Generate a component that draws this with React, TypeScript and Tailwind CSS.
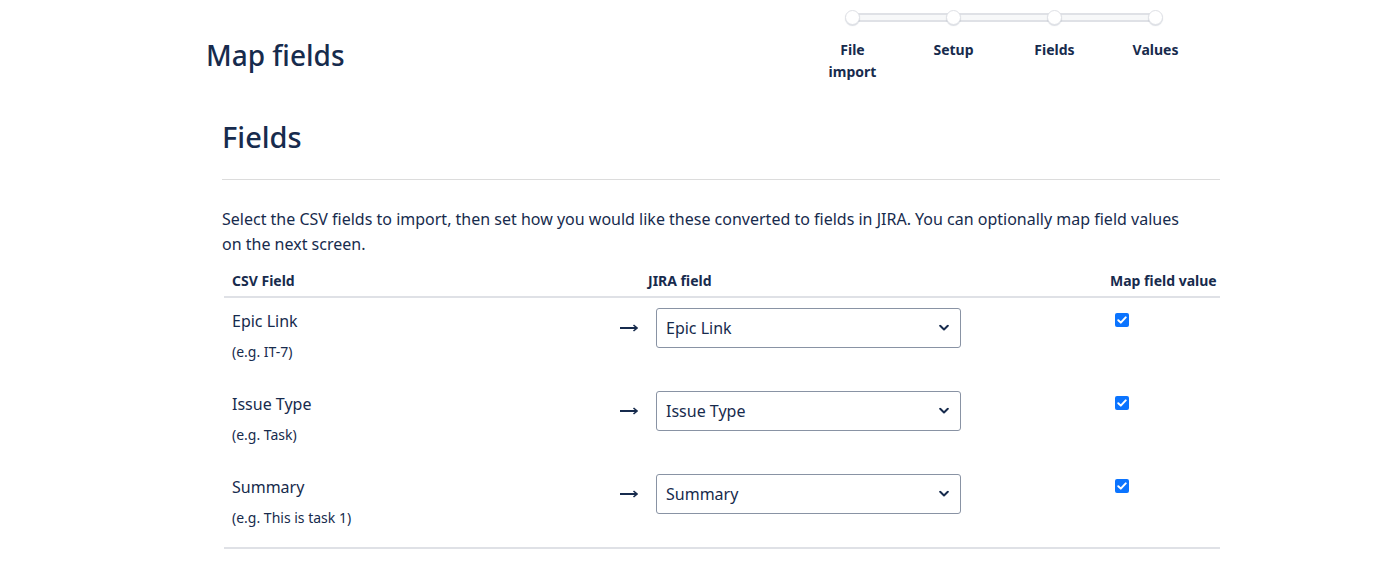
import React from 'react';

const steps = [
  { label: ['File', 'import'] },
  { label: ['Setup'] },
  { label: ['Fields'] },
  { label: ['Values'] },
];

const rows = [
  { name: 'Epic Link', example: '(e.g. IT-7)', value: 'Epic Link' },
  { name: 'Issue Type', example: '(e.g. Task)', value: 'Issue Type' },
  { name: 'Summary', example: '(e.g. This is task 1)', value: 'Summary' },
];

const Track = ({ hidden }: { hidden?: boolean }) => (
  <div
    className={
      hidden
        ? 'h-[9px] flex-1'
        : 'h-[9px] flex-1 border-y-2 border-[#dfe1e6] bg-[#f7f8f9]'
    }
  />
);

const Tracker = () => (
  <div className="flex">
    {steps.map((s, i) => (
      <div key={i} className="flex w-[101px] flex-col items-center">
        <div className="flex h-[14px] w-full items-center">
          <Track hidden={i === 0} />
          <div className="-mx-[2px] z-10 h-[15px] w-[15px] rounded-full border border-[#dfe1e6] bg-white shadow-[0_1px_1px_rgba(9,30,66,0.15)]" />
          <Track hidden={i === steps.length - 1} />
        </div>
        <div className="mt-[15px] text-center text-[14px] font-bold leading-[22px] text-[#172b4d]">
          {s.label.map((l) => (
            <div key={l}>{l}</div>
          ))}
        </div>
      </div>
    ))}
  </div>
);

const Chevron = () => (
  <svg width="10" height="7" viewBox="0 0 10 7" className="pointer-events-none absolute right-[12px] top-1/2 -translate-y-1/2">
    <path d="M1.2 1.3 5 5 8.8 1.3" fill="none" stroke="#172b4d" strokeWidth="2" strokeLinecap="round" strokeLinejoin="round" />
  </svg>
);

const Arrow = () => (
  <svg width="18" height="10" viewBox="0 0 18 10">
    <path d="M0 5H16.5" stroke="#172b4d" strokeWidth="2" />
    <path d="M13.5 2 17 5 13.5 8" fill="none" stroke="#172b4d" strokeWidth="1.6" />
  </svg>
);

const Check = () => (
  <span className="flex h-[14px] w-[14px] items-center justify-center rounded-[2px] bg-[#0b74ff]">
    <svg width="10" height="8" viewBox="0 0 10 8">
      <path d="M1.3 4.2 3.8 6.6 8.7 1.4" fill="none" stroke="white" strokeWidth="2" strokeLinecap="round" strokeLinejoin="round" />
    </svg>
  </span>
);

export default function App() {
  return (
    <div className="min-h-screen bg-white pl-[206px] text-[#172b4d]" style={{ fontFamily: '"Noto Sans", "Open Sans", Arial, sans-serif' }}>
      <div className="flex w-[1000px] items-start pt-[10px]">
        <h1 className="mt-[27px] text-[28px] font-medium leading-[36px]">Map fields</h1>
        <div className="ml-auto">
          <Tracker />
        </div>
      </div>

      <div className="ml-[16px] w-[998px]">
        <h2 className="mt-[36px] text-[29px] font-medium leading-[36px]">Fields</h2>
        <div className="mt-[24px] border-t border-[#dcdcdc]" />
        <p className="mt-[27px] w-[970px] text-[16px] leading-[25px]">
          Select the CSV fields to import, then set how you would like these converted to fields in JIRA. You can optionally map field values on the next screen.
        </p>

        <div className="ml-[2px] mt-[6px] w-[996px]">
          <div className="grid grid-cols-[422px_454px_120px] border-b-2 border-[#dfe1e6] pb-[5px] pt-[8px] text-[14px] font-bold leading-[20px]">
            <div className="pl-[8px]">CSV Field</div>
            <div className="pl-[2px]">JIRA field</div>
            <div className="pl-[10px]">Map field value</div>
          </div>
          <div className="border-b-2 border-[#dfe1e6]">
            {rows.map((r) => (
              <div key={r.name} className="grid h-[83px] grid-cols-[422px_454px_120px] pt-[10px]">
                <div className="flex justify-between pl-[8px] pr-[8px]">
                  <div className="pt-px">
                    <div className="text-[16px] leading-[24px]">{r.name}</div>
                    <div className="mt-[9px] text-[14px] leading-[20px]">{r.example}</div>
                  </div>
                  <div className="flex h-[40px] items-center">
                    <Arrow />
                  </div>
                </div>
                <div className="pl-[10px]">
                  <div className="relative w-[305px]">
                    <select
                      defaultValue={r.value}
                      className="h-[40px] w-full appearance-none rounded-[3px] border border-[#8993a4] bg-white pl-[9px] text-[16px] text-[#172b4d] outline-none"
                    >
                      <option>{r.value}</option>
                    </select>
                    <Chevron />
                  </div>
                </div>
                <div className="pl-[15px] pt-[5px]">
                  <Check />
                </div>
              </div>
            ))}
          </div>
        </div>
      </div>
    </div>
  );
}
